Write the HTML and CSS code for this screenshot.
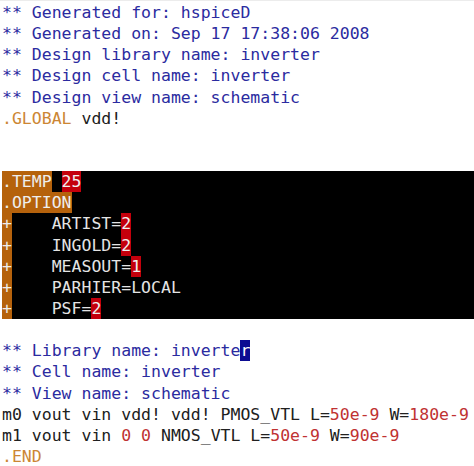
FILE: index.html
```html
<!DOCTYPE html>
<html>
<head>
<meta charset="utf-8">
<link rel="stylesheet" href="styles.css">
</head>
<body>
<div class="editor">
<div class="ln cm">** Generated for: hspiceD</div>
<div class="ln cm">** Generated on: Sep 17 17:38:06 2008</div>
<div class="ln cm">** Design library name: inverter</div>
<div class="ln cm">** Design cell name: inverter</div>
<div class="ln cm">** Design view name: schematic</div>
<div class="ln"><span class="kw">.GLOBAL</span> vdd!</div>
<div class="ln"> </div>
<div class="ln"> </div>
<div class="term">
<div class="ln"><span class="ob">.TEMP</span> <span class="rb">25</span></div>
<div class="ln"><span class="ob">.OPTION</span></div>
<div class="ln"><span class="ob">+</span>    ARTIST=<span class="rb">2</span></div>
<div class="ln"><span class="ob">+</span>    INGOLD=<span class="rb">2</span></div>
<div class="ln"><span class="ob">+</span>    MEASOUT=<span class="rb">1</span></div>
<div class="ln"><span class="ob">+</span>    PARHIER=LOCAL</div>
<div class="ln"><span class="ob">+</span>    PSF=<span class="rb">2</span></div>
</div>
<div class="ln"> </div>
<div class="ln cm">** Library name: invert<span class="cursor">e</span><span class="cursor sel">r</span></div>
<div class="ln cm">** Cell name: inverter</div>
<div class="ln cm">** View name: schematic</div>
<div class="ln">m0 vout vin vdd! vdd! PMOS_VTL L=<span class="num">50e-9</span> W=<span class="num">180e-9</span></div>
<div class="ln">m1 vout vin <span class="num">0 0</span> NMOS_VTL L=<span class="num">50e-9</span> W=<span class="num">90e-9</span></div>
<div class="ln"><span class="kw">.END</span></div>
</div>
</body>
</html>
```

FILE: styles.css
```css
html, body {
  margin: 0;
  padding: 0;
  background: #ffffff;
}
body {
  width: 474px;
  height: 466px;
  overflow: hidden;
  border-top: 1px solid #ececec;
  box-sizing: border-box;
}
.editor {
  padding: 1px 0 0 2px;
  font-family: "DejaVu Sans Mono", monospace;
  font-size: 16.5px;
  color: #202020;
}
.ln {
  white-space: pre;
  height: 21.15px;
  line-height: 21.15px;
}
.cm {
  color: #2b2ba0;
}
.kw {
  color: #cc8634;
}
.num {
  color: #c03232;
}
.term {
  background: #000000;
  color: #e4e4e4;
}
.ob,
.rb {
  display: inline-block;
  height: 21.15px;
  vertical-align: top;
}
.ob {
  background: #b5620c;
  color: #eeeeee;
}
.rb {
  background: #c4000c;
  color: #f0f0f0;
}
.cursor {
  display: inline-block;
  height: 21.15px;
  vertical-align: top;
}
.sel {
  background: #0c0c92;
  color: #ffffff;
}
```
